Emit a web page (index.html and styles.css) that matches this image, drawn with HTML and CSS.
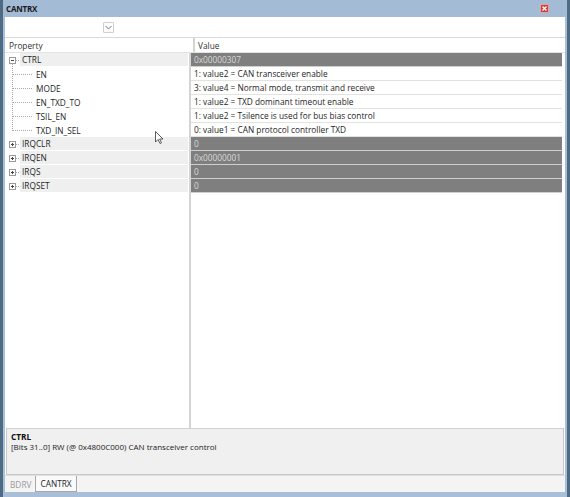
FILE: index.html
```html
<!DOCTYPE html>
<html>
<head>
<meta charset="utf-8">
<link rel="stylesheet" href="styles.css">
</head>
<body>
<div class="window">
  <div class="titlebar">
    <span class="title">CANTRX</span>
    <span class="close"><svg width="7" height="7" viewBox="0 0 7 7"><path d="M1.5 1.5 L5.5 5.5 M5.5 1.5 L1.5 5.5" stroke="#fff" stroke-width="1.3"/></svg></span>
  </div>
  <div class="client">
    <div class="toolbar">
      <span class="dd"><svg width="7" height="5" viewBox="0 0 7 5"><path d="M0.5 1 L3.5 4 L6.5 1" fill="none" stroke="#777" stroke-width="1"/></svg></span>
    </div>
    <div class="grid">
      <div class="hdr"><div class="c1">Property</div><div class="c2">Value</div></div>

      <div class="row reg">
        <div class="c1"><svg class="tree" width="15" height="13" viewBox="0 0 15 13"><rect x="4.5" y="3.5" width="6" height="6" fill="#fff" stroke="#9a9a9a"/><path d="M6 6.5 H9" stroke="#444"/><path d="M11 6.5 H15" stroke="#aaa" stroke-dasharray="1 1"/><path d="M7.5 10 V13" stroke="#aaa" stroke-dasharray="1 1"/></svg><span class="name">CTRL</span></div>
        <div class="c2">0x00000307</div>
      </div>
      <div class="row fld">
        <div class="c1"><svg class="tree" width="29" height="13" viewBox="0 0 29 13"><path d="M7.5 0 V14" stroke="#aaa" stroke-dasharray="1 1"/><path d="M8 6.5 H28" stroke="#aaa" stroke-dasharray="1 1"/></svg><span class="name">EN</span></div>
        <div class="c2">1: value2 = CAN transceiver enable</div>
      </div>
      <div class="row fld">
        <div class="c1"><svg class="tree" width="29" height="13" viewBox="0 0 29 13"><path d="M7.5 0 V14" stroke="#aaa" stroke-dasharray="1 1"/><path d="M8 6.5 H28" stroke="#aaa" stroke-dasharray="1 1"/></svg><span class="name">MODE</span></div>
        <div class="c2">3: value4 = Normal mode, transmit and receive</div>
      </div>
      <div class="row fld">
        <div class="c1"><svg class="tree" width="29" height="13" viewBox="0 0 29 13"><path d="M7.5 0 V14" stroke="#aaa" stroke-dasharray="1 1"/><path d="M8 6.5 H28" stroke="#aaa" stroke-dasharray="1 1"/></svg><span class="name">EN_TXD_TO</span></div>
        <div class="c2">1: value2 = TXD dominant timeout enable</div>
      </div>
      <div class="row fld">
        <div class="c1"><svg class="tree" width="29" height="13" viewBox="0 0 29 13"><path d="M7.5 0 V14" stroke="#aaa" stroke-dasharray="1 1"/><path d="M8 6.5 H28" stroke="#aaa" stroke-dasharray="1 1"/></svg><span class="name">TSIL_EN</span></div>
        <div class="c2">1: value2 = Tsilence is used for bus bias control</div>
      </div>
      <div class="row fld">
        <div class="c1"><svg class="tree" width="29" height="13" viewBox="0 0 29 13"><path d="M7.5 0 V7" stroke="#aaa" stroke-dasharray="1 1"/><path d="M8 6.5 H28" stroke="#aaa" stroke-dasharray="1 1"/></svg><span class="name">TXD_IN_SEL</span></div>
        <div class="c2">0: value1 = CAN protocol controller TXD</div>
      </div>

      <div class="row reg">
        <div class="c1"><svg class="tree" width="15" height="13" viewBox="0 0 15 13"><rect x="4.5" y="3.5" width="6" height="6" fill="#fff" stroke="#9a9a9a"/><path d="M6 6.5 H9 M7.5 5 V8" stroke="#444"/><path d="M11 6.5 H15" stroke="#aaa" stroke-dasharray="1 1"/></svg><span class="name">IRQCLR</span></div>
        <div class="c2">0</div>
      </div>
      <div class="row reg">
        <div class="c1"><svg class="tree" width="15" height="13" viewBox="0 0 15 13"><rect x="4.5" y="3.5" width="6" height="6" fill="#fff" stroke="#9a9a9a"/><path d="M6 6.5 H9 M7.5 5 V8" stroke="#444"/><path d="M11 6.5 H15" stroke="#aaa" stroke-dasharray="1 1"/></svg><span class="name">IRQEN</span></div>
        <div class="c2">0x00000001</div>
      </div>
      <div class="row reg">
        <div class="c1"><svg class="tree" width="15" height="13" viewBox="0 0 15 13"><rect x="4.5" y="3.5" width="6" height="6" fill="#fff" stroke="#9a9a9a"/><path d="M6 6.5 H9 M7.5 5 V8" stroke="#444"/><path d="M11 6.5 H15" stroke="#aaa" stroke-dasharray="1 1"/></svg><span class="name">IRQS</span></div>
        <div class="c2">0</div>
      </div>
      <div class="row reg">
        <div class="c1"><svg class="tree" width="15" height="13" viewBox="0 0 15 13"><rect x="4.5" y="3.5" width="6" height="6" fill="#fff" stroke="#9a9a9a"/><path d="M6 6.5 H9 M7.5 5 V8" stroke="#444"/><path d="M11 6.5 H15" stroke="#aaa" stroke-dasharray="1 1"/></svg><span class="name">IRQSET</span></div>
        <div class="c2">0</div>
      </div>

      <div class="filler"><div class="c1"></div><div class="c2"></div></div>
      <svg class="cursor" width="9" height="13" viewBox="0 0 9 13"><path d="M0.5 0.5 V11 L3 8.5 L5 12.5 L6.5 11.8 L4.6 8 H8 Z" fill="#fff" stroke="#333" stroke-width="0.8"/></svg>
    </div>
    <div class="desc">
      <div class="dtitle">CTRL</div>
      <div class="dtext">[Bits 31..0] RW (@ 0x4800C000) CAN transceiver control</div>
    </div>
  </div>
  <div class="tabs">
    <span class="tab">BDRV</span>
    <span class="tab active">CANTRX</span>
  </div>
</div>
</body>
</html>
```

FILE: styles.css
```css
html, body {
  margin: 0;
  padding: 0;
}
body {
  width: 570px;
  height: 497px;
  background: #4d6b82;
  font-family: "Open Sans", "Noto Sans", sans-serif;
  font-size: 8.3px;
  color: #1e1e1e;
  overflow: hidden;
}
.window {
  margin-left: 3px;
  width: 564px;
  height: 497px;
  background: #a9bfd8;
  display: flex;
  flex-direction: column;
  box-sizing: border-box;
  padding: 0 2px 5px 2px;
}
.titlebar {
  height: 17px;
  flex: none;
  display: flex;
  align-items: center;
  justify-content: space-between;
  margin: 0 -2px;
  padding: 0 0 0 3px;
  background: #a3bbd5;
}
.title {
  font-weight: 700;
  font-size: 8px;
  color: #1a1a1a;
  letter-spacing: -0.2px;
}
.close {
  width: 7px;
  height: 7px;
  background: #c9403c;
  border: 1px solid #e8a0a0;
  display: flex;
  align-items: center;
  justify-content: center;
  margin-right: 18px;
}
.client {
  flex: 1;
  display: flex;
  flex-direction: column;
  background: #fff;
}
.toolbar {
  height: 20px;
  flex: none;
  border-bottom: 1px solid #d9d9d9;
  display: flex;
  align-items: center;
  padding-left: 98px;
}
.dd {
  width: 9px;
  height: 9px;
  border: 1px solid #cfcfcf;
  border-radius: 1px;
  display: flex;
  align-items: center;
  justify-content: center;
  background: #fdfdfd;
}
.grid {
  flex: 1;
  display: flex;
  flex-direction: column;
  position: relative;
}
.hdr, .row, .filler {
  display: flex;
}
.c1 {
  width: 184px;
  flex: none;
  border-right: 2px solid #d4d4d4;
  display: flex;
  align-items: center;
  white-space: nowrap;
}
.c2 {
  flex: 1;
  margin-right: 3px;
  display: flex;
  align-items: center;
  padding-left: 3px;
  white-space: nowrap;
}
.hdr {
  height: 14px;
  border-bottom: 1px solid #e4e4e4;
  color: #333;
}
.hdr .c1 {
  padding-left: 4px;
}
.row {
  height: 14px;
}
.row .c1 {
  height: 14px;
}
.row .c2 {
  height: 13px;
  border-bottom: 1px solid #e2e2e2;
}
.row.reg .c2 {
  background: #7f7f7f;
  color: #d8d8d8;
  border-bottom-color: #cfcfcf;
}
.tree {
  flex: none;
  display: block;
}
.row.reg .name {
  flex: 1;
  height: 13px;
  display: flex;
  align-items: center;
  background: #efefef;
  padding-left: 2px;
  margin-right: 1px;
  border-bottom: 1px solid #fff;
}
.row.fld .name {
  padding-left: 2px;
}
.filler {
  flex: 1;
}
.filler .c2 {
  border: none;
}
.cursor {
  position: absolute;
  left: 150px;
  top: 93px;
}
.desc {
  height: 47px;
  flex: none;
  background: #f0f0f0;
  border: 1px solid #c8c8c8;
  margin: 0 1px 0 1px;
  padding: 3px 4px;
  box-sizing: border-box;
  border-top: 1px solid #d0d0d0;
}
.dtitle {
  font-weight: 700;
  color: #111;
  line-height: 10px;
}
.dtext {
  line-height: 10px;
  color: #222;
  font-size: 8px;
}
.tabs {
  height: 16px;
  flex: none;
  background: #f4f4f4;
  display: flex;
  align-items: stretch;
  padding-left: 1px;
  border-top: 1px solid #e0e0e0;
}
.tab {
  display: flex;
  align-items: center;
  padding: 0 4px;
  color: #9a9a9a;
}
.tab.active {
  background: #fafafa;
  color: #1e1e1e;
  border: 1px solid #a8a8a8;
  border-top: none;
  padding: 0 4px;
}
```
